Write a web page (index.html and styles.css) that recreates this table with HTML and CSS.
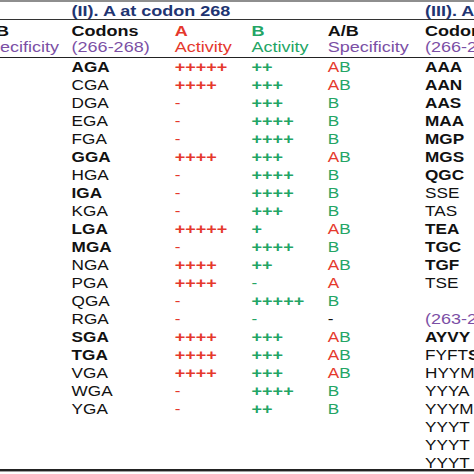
FILE: index.html
```html
<!DOCTYPE html>
<html>
<head>
<meta charset="utf-8">
<link rel="stylesheet" href="styles.css">
</head>
<body>
<div class="page">
  <div class="sheet">
    <div class="cols title-row">
      <span class="t2">(II). A at codon 268</span>
      <span class="t3">(III). A at codons 266-268</span>
    </div>
    <div class="cols head">
      <div><b>A/B</b><span class="pu">Specificity</span></div>
      <div><b>Codons</b><span class="pu">(266-268)</span></div>
      <div class="r"><b>A</b><span>Activity</span></div>
      <div class="g"><b>B</b><span>Activity</span></div>
      <div><b>A/B</b><span class="pu">Specificity</span></div>
      <div><b>Codons</b><span class="pu">(266-268)</span></div>
    </div>
    <div class="cols body">
      <span></span><span class="b">AGA</span><span class="r p">+++++</span><span class="g p">++</span><span><i class="r">A</i><i class="g">B</i></span><span class="b">AAA</span>
      <span></span><span>CGA</span><span class="r p">++++</span><span class="g p">+++</span><span><i class="r">A</i><i class="g">B</i></span><span class="b">AAN</span>
      <span></span><span>DGA</span><span class="r">-</span><span class="g p">+++</span><span class="g">B</span><span class="b">AAS</span>
      <span></span><span>EGA</span><span class="r">-</span><span class="g p">++++</span><span class="g">B</span><span class="b">MAA</span>
      <span></span><span>FGA</span><span class="r">-</span><span class="g p">++++</span><span class="g">B</span><span class="b">MGP</span>
      <span></span><span class="b">GGA</span><span class="r p">++++</span><span class="g p">+++</span><span><i class="r">A</i><i class="g">B</i></span><span class="b">MGS</span>
      <span></span><span>HGA</span><span class="r">-</span><span class="g p">++++</span><span class="g">B</span><span class="b">QGC</span>
      <span></span><span class="b">IGA</span><span class="r">-</span><span class="g p">++++</span><span class="g">B</span><span>SSE</span>
      <span></span><span>KGA</span><span class="r">-</span><span class="g p">+++</span><span class="g">B</span><span>TAS</span>
      <span></span><span class="b">LGA</span><span class="r p">+++++</span><span class="g p">+</span><span><i class="r">A</i><i class="g">B</i></span><span class="b">TEA</span>
      <span></span><span class="b">MGA</span><span class="r">-</span><span class="g p">++++</span><span class="g">B</span><span class="b">TGC</span>
      <span></span><span>NGA</span><span class="r p">++++</span><span class="g p">++</span><span><i class="r">A</i><i class="g">B</i></span><span class="b">TGF</span>
      <span></span><span>PGA</span><span class="r p">++++</span><span class="g">-</span><span class="r">A</span><span>TSE</span>
      <span></span><span>QGA</span><span class="r">-</span><span class="g p">+++++</span><span class="g">B</span><span></span>
      <span></span><span>RGA</span><span class="r">-</span><span class="g">-</span><span>-</span><span class="pu sub">(263-266)</span>
      <span></span><span class="b">SGA</span><span class="r p">++++</span><span class="g p">+++</span><span><i class="r">A</i><i class="g">B</i></span><span class="b">AYVY</span>
      <span></span><span class="b">TGA</span><span class="r p">++++</span><span class="g p">+++</span><span><i class="r">A</i><i class="g">B</i></span><span>FYFT<b>S</b></span>
      <span></span><span>VGA</span><span class="r p">++++</span><span class="g p">+++</span><span><i class="r">A</i><i class="g">B</i></span><span>HYYM</span>
      <span></span><span>WGA</span><span class="r">-</span><span class="g p">++++</span><span class="g">B</span><span>YYYA</span>
      <span></span><span>YGA</span><span class="r">-</span><span class="g p">++</span><span class="g">B</span><span>YYYM</span>
      <span></span><span></span><span></span><span></span><span></span><span>YYYT</span>
      <span></span><span></span><span></span><span></span><span></span><span>YYYT</span>
      <span></span><span></span><span></span><span></span><span></span><span>YYYT</span>
    </div>
    <div class="rule"></div>
  </div>
</div>
</body>
</html>
```

FILE: styles.css
```css
html, body {
  margin: 0;
  padding: 0;
  background: #fff;
  overflow: hidden;
}

.page {
  width: 474px;
  height: 474px;
  overflow: hidden;
  box-sizing: border-box;
  border-top: 2px solid #8e8e8e;
  font-family: "Liberation Sans", Arial, sans-serif;
  color: #111;
}

.sheet {
  width: 420px;
  margin-left: -22px;
  transform: scaleX(1.2);
  transform-origin: 0 0;
}

.cols {
  display: grid;
  grid-template-columns: 78px 86px 64px 63.5px 81px 1fr;
  white-space: nowrap;
}

.title-row {
  height: 17px;
  border-bottom: 1px solid #333;
  font-size: 15px;
  line-height: 17px;
  font-weight: bold;
  color: #1f3572;
}

.t2 {
  grid-column: 2 / span 4;
}

.t3 {
  grid-column: 6;
}

.head {
  padding: 3px 0 2px;
  border-bottom: 1px solid #222;
  font-size: 15px;
  line-height: 16px;
}

.head > div {
  display: flex;
  flex-direction: column;
}

.body {
  height: 411px;
  overflow: hidden;
  grid-auto-rows: 18px;
  font-size: 14.3px;
  line-height: 18px;
  border-bottom: 2px solid #222;
}

.rule {
  height: 1px;
  background: #a0a0a0;
}

.b {
  font-weight: bold;
}

.p {
  font-size: 15px;
  font-weight: bold;
}

i {
  font-style: normal;
}

.r {
  color: #e5382c;
}

.g {
  color: #23a565;
}

.pu {
  color: #7b4fa5;
}

.sub {
  font-size: 15px;
}
```
